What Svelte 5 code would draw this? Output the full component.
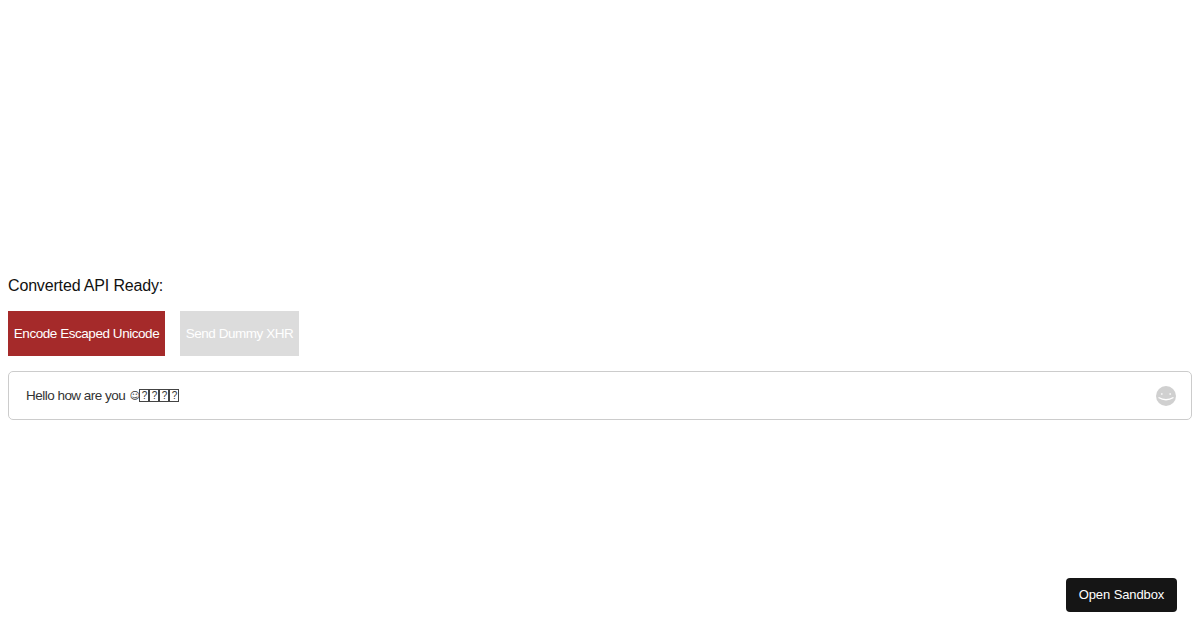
<script>
  const tofu = [0, 1, 2, 3];
</script>

<main class="page">
  <p class="title">Converted API Ready:</p>
  <div class="actions">
    <button class="btn primary">Encode Escaped Unicode</button>
    <button class="btn disabled" disabled>Send Dummy XHR</button>
  </div>
  <div class="input">
    <span class="text">Hello how are you <span class="smiley">☺</span>{#each tofu as t (t)}<span class="box">?</span>{/each}</span>
    <svg class="smile" viewBox="0 0 20 20" width="20" height="20" aria-hidden="true">
      <circle cx="10" cy="10" r="10" fill="#d0d0d0" />
      <circle cx="5.8" cy="8" r="0.9" fill="#f4f4f4" />
      <circle cx="14.2" cy="8" r="0.9" fill="#f4f4f4" />
      <path d="M2.5 11.5 Q10 16 17.5 11.5" fill="none" stroke="#fff" stroke-width="1.4" />
    </svg>
  </div>
</main>
<button class="sandbox">Open Sandbox</button>

<style>
  :global(body) {
    margin: 0;
    background: #fff;
    font-family: "Liberation Sans", Arial, sans-serif;
  }
  .page {
    padding: 276px 8px 0;
    box-sizing: border-box;
  }
  .title {
    margin: 0 0 16px;
    font-size: 16px;
    line-height: 19px;
    letter-spacing: -0.16px;
    color: #111;
  }
  .actions {
    display: flex;
    gap: 15px;
    margin-bottom: 15px;
  }
  .btn {
    width: 157px;
    height: 45px;
    padding: 0;
    border: 0;
    font: 13.5px "Liberation Sans", Arial, sans-serif;
    letter-spacing: -0.45px;
    color: #fff;
  }
  .primary {
    background: #a52a2a;
  }
  .disabled {
    width: 119px;
    background: #dcdcdc;
    background-image: radial-gradient(#d3d3d3 0.5px, transparent 0.6px);
    background-size: 6px 6px;
  }
  .input {
    height: 49px;
    box-sizing: border-box;
    border: 1px solid #ccc;
    border-radius: 5px;
    padding: 0 15px 0 17px;
    display: flex;
    align-items: center;
    justify-content: space-between;
  }
  .text {
    display: inline-flex;
    align-items: center;
    white-space: pre;
    font-size: 13.5px;
    letter-spacing: -0.52px;
    color: #333;
  }
  .smiley {
    font-family: "DejaVu Sans", sans-serif;
    font-size: 10px;
    letter-spacing: 0;
    width: 10px;
    margin-left: 1px;
    overflow: hidden;
  }
  .box {
    box-sizing: border-box;
    width: 10px;
    height: 13px;
    border: 1px solid #444;
    font-size: 10px;
    line-height: 11px;
    letter-spacing: 0;
    text-align: center;
  }
  .sandbox {
    position: fixed;
    right: 23px;
    bottom: 18px;
    width: 111px;
    height: 34px;
    border: 0;
    border-radius: 4px;
    background: #151515;
    color: #fff;
    font: 13px "Liberation Sans", Arial, sans-serif;
    letter-spacing: -0.1px;
    padding: 0 0 2px;
  }
</style>
